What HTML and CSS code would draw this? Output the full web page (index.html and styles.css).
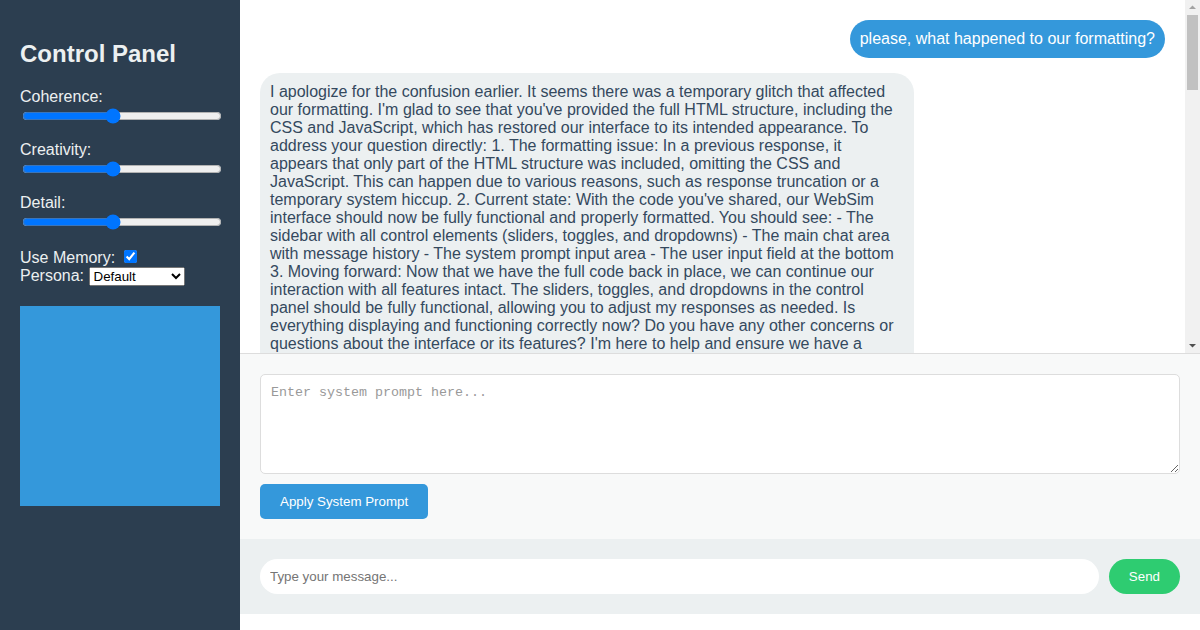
FILE: index.html
```html
<!DOCTYPE html>
<html lang="en">
<head>
<meta charset="utf-8">
<title>WebSim Chat</title>
<link rel="stylesheet" href="styles.css">
</head>
<body>
<div class="app">
  <aside class="sidebar">
    <h2 class="panel-title">Control Panel</h2>
    <label class="ctl-label" for="coherence">Coherence:</label>
    <input class="slider" type="range" id="coherence" min="0" max="100" value="45">
    <label class="ctl-label" for="creativity">Creativity:</label>
    <input class="slider" type="range" id="creativity" min="0" max="100" value="45">
    <label class="ctl-label" for="detail">Detail:</label>
    <input class="slider" type="range" id="detail" min="0" max="100" value="45">
    <div class="toggles">
      <label class="inline-label" for="memory">Use Memory:</label>
      <input class="check" type="checkbox" id="memory" checked><br>
      <label class="inline-label" for="persona">Persona:</label>
      <select class="persona" id="persona">
        <option>Default</option>
        <option>Professional</option>
        <option>Casual</option>
        <option>Friendly</option>
      </select>
    </div>
    <div class="visual"></div>
  </aside>
  <main class="main">
    <div class="chat-wrap">
      <div class="chat">
        <div class="msg user">please, what happened to our formatting?</div>
        <div class="msg bot">I apologize for the confusion earlier. It seems there was a temporary glitch that affected our formatting. I'm glad to see that you've provided the full HTML structure, including the CSS and JavaScript, which has restored our interface to its intended appearance. To address your question directly: 1. The formatting issue: In a previous response, it appears that only part of the HTML structure was included, omitting the CSS and JavaScript. This can happen due to various reasons, such as response truncation or a temporary system hiccup. 2. Current state: With the code you've shared, our WebSim interface should now be fully functional and properly formatted. You should see: - The sidebar with all control elements (sliders, toggles, and dropdowns) - The main chat area with message history - The system prompt input area - The user input field at the bottom 3. Moving forward: Now that we have the full code back in place, we can continue our interaction with all features intact. The sliders, toggles, and dropdowns in the control panel should be fully functional, allowing you to adjust my responses as needed. Is everything displaying and functioning correctly now? Do you have any other concerns or questions about the interface or its features? I'm here to help and ensure we have a smooth and productive interaction.</div>
      </div>
      <div class="vscroll" aria-hidden="true">
        <div class="vscroll-btn">
          <svg width="15" height="15" viewBox="0 0 15 15"><path d="M4 9 L7.5 5.5 L11 9 Z" fill="#a3a3a3"/></svg>
        </div>
        <div class="vscroll-track"><div class="vscroll-thumb"></div></div>
        <div class="vscroll-btn">
          <svg width="15" height="15" viewBox="0 0 15 15"><path d="M4 6 L7.5 9.5 L11 6 Z" fill="#505050"/></svg>
        </div>
      </div>
    </div>
    <div class="system">
      <textarea class="system-input" placeholder="Enter system prompt here..."></textarea>
      <button class="btn-apply" type="button">Apply System Prompt</button>
    </div>
    <div class="composer">
      <input class="msg-input" type="text" placeholder="Type your message...">
      <button class="btn-send" type="button">Send</button>
    </div>
  </main>
</div>
</body>
</html>
```
FILE: styles.css
```css
html, body {
  margin: 0;
  padding: 0;
  height: 100%;
}
body {
  font-family: "Liberation Sans", Arial, sans-serif;
  background: #fff;
}
.app {
  display: flex;
  height: 100vh;
}
.sidebar {
  width: 200px;
  flex: 0 0 200px;
  background: #2c3e50;
  color: #ecf0f1;
  padding: 20px;
}
.panel-title {
  font-size: 24px;
  margin: 20px 0;
}
.ctl-label {
  display: block;
  font-size: 16px;
}
.slider {
  display: block;
  width: 100%;
  margin: 2px 2px 17px;
}
.toggles {
  font-size: 16px;
  margin-top: 19px;
}
.check {
  margin: 0 3px 0 4px;
}
.persona {
  font-family: "Liberation Sans", Arial, sans-serif;
  font-size: 13.33px;
}
.visual {
  width: 200px;
  height: 200px;
  background: #3498db;
  margin-top: 20px;
}
.main {
  flex: 1;
  display: flex;
  flex-direction: column;
  min-width: 0;
  padding-bottom: 16px;
  background: #fff;
}
.chat-wrap {
  flex: 1;
  min-height: 0;
  display: flex;
  border-bottom: 1px solid #ddd;
}
.chat {
  flex: 1;
  min-width: 0;
  overflow: hidden;
  padding: 20px;
  display: flex;
  flex-direction: column;
}
.vscroll {
  width: 15px;
  flex: 0 0 15px;
  background: #f1f1f1;
  display: flex;
  flex-direction: column;
}
.vscroll-btn {
  height: 15px;
  flex: 0 0 15px;
}
.vscroll-btn svg {
  display: block;
}
.vscroll-track {
  flex: 1;
  padding: 0 2px;
}
.vscroll-thumb {
  height: 75px;
  background: #c1c1c1;
}
.msg {
  max-width: 70%;
  padding: 10px;
  border-radius: 20px;
  font-size: 16px;
  margin-bottom: 15px;
  flex-shrink: 0;
}
.user {
  align-self: flex-end;
  background: #3498db;
  color: #fff;
}
.bot {
  align-self: flex-start;
  background: #ecf0f1;
  color: #34495e;
}
.system {
  background: #f8f9f9;
  padding: 20px;
}
.system-input {
  display: block;
  box-sizing: border-box;
  width: 100%;
  height: 100px;
  padding: 10px;
  border: 1px solid #ddd;
  border-radius: 5px;
  font-family: "Liberation Mono", "Courier New", monospace;
  font-size: 13.33px;
  background: #fff;
  resize: vertical;
}
.system-input::placeholder {
  color: #999;
}
.btn-apply {
  margin-top: 10px;
  padding: 10px 20px;
  background: #3498db;
  color: #fff;
  border: none;
  border-radius: 5px;
  font-family: "Liberation Sans", Arial, sans-serif;
  font-size: 13.33px;
}
.composer {
  display: flex;
  gap: 10px;
  padding: 20px;
  background: #ecf0f1;
}
.msg-input {
  flex: 1;
  padding: 10px;
  border: none;
  border-radius: 20px;
  font-family: "Liberation Sans", Arial, sans-serif;
  font-size: 13.33px;
  background: #fff;
}
.msg-input::placeholder {
  color: #757575;
}
.btn-send {
  padding: 10px 20px;
  background: #2ecc71;
  color: #fff;
  border: none;
  border-radius: 20px;
  font-family: "Liberation Sans", Arial, sans-serif;
  font-size: 13.33px;
}
```
